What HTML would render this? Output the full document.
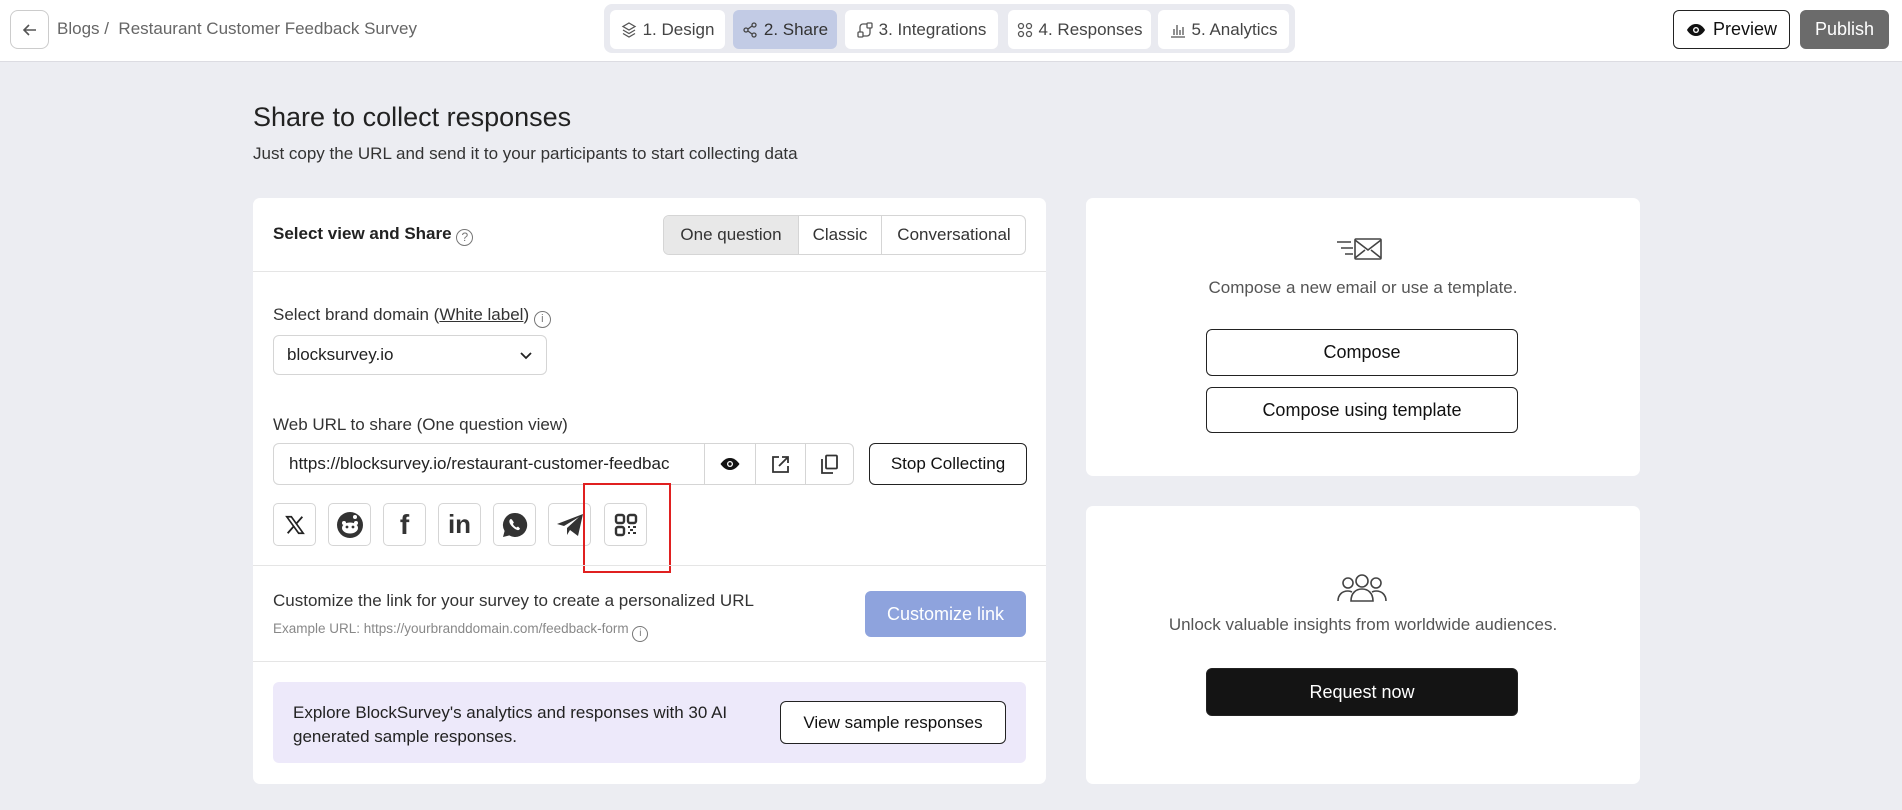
<!DOCTYPE html>
<html><head><meta charset="utf-8"><style>
*{box-sizing:border-box;margin:0;padding:0}
body{width:1902px;height:810px;background:#ecedf2;font-family:"Liberation Sans",sans-serif;color:#222;position:relative;overflow:hidden}
.a{position:absolute}
.hdr{left:0;top:0;width:1902px;height:62px;background:#fff;border-bottom:1px solid #dcdce2}
.tabs{left:604px;top:4px;width:691px;height:49px;background:#e9eaf0;border-radius:8px}
.tab{position:absolute;top:6px;height:39px;background:#fff;border-radius:6px;font-size:17px;color:#444;display:flex;align-items:center;justify-content:center;gap:6px}
.card{background:#fff;border-radius:7px}
.btn{position:absolute;display:flex;align-items:center;justify-content:center;border:1px solid #222;border-radius:6px;font-size:17px;background:#fff;color:#111}
.soc{position:absolute;top:503px;width:43px;height:43px;border:1px solid #d5d5d5;border-radius:5px;display:flex;align-items:center;justify-content:center}
.t{position:absolute;white-space:nowrap}
</style></head><body>
<div class="a hdr"></div>
<div class="a" style="left:10px;top:10px;width:39px;height:39px;border:1px solid #ccc;border-radius:8px;display:flex;align-items:center;justify-content:center"><svg width="18" height="18" viewBox="0 0 18 18"><path d="M15 9H3M8 4L3 9l5 5" fill="none" stroke="#555" stroke-width="1.6"/></svg></div>
<div class="t" style="left:57px;top:19px;font-size:17px;color:#666">Blogs /&nbsp;&nbsp;Restaurant Customer Feedback Survey</div>
<div class="a tabs">
<div class="tab" style="left:6px;width:115px"><svg width="16" height="16" viewBox="0 0 16 16" fill="none" stroke="#555" stroke-width="1.3"><path d="M8 1l6 3.5-6 3.5-6-3.5z M2 8l6 3.5 6-3.5 M2 11.5l6 3.5 6-3.5"/></svg>1. Design</div>
<div class="tab" style="left:129px;width:104px;background:#c2cbe5;color:#333"><svg width="16" height="16" viewBox="0 0 16 16" fill="none" stroke="#444" stroke-width="1.3"><circle cx="12" cy="3" r="2"/><circle cx="4" cy="8" r="2"/><circle cx="12" cy="13" r="2"/><path d="M6 7l4-3M6 9l4 3"/></svg>2. Share</div>
<div class="tab" style="left:241px;width:153px"><svg width="16" height="16" viewBox="0 0 16 16" fill="none" stroke="#555" stroke-width="1.3"><rect x="1" y="10" width="5" height="5" rx="1"/><rect x="10" y="1" width="5" height="5" rx="1"/><path d="M3 10V5a3 3 0 013-3h4M13 6v5a3 3 0 01-3 3H6"/></svg>3. Integrations</div>
<div class="tab" style="left:404px;width:143px"><svg width="16" height="16" viewBox="0 0 16 16" fill="none" stroke="#555" stroke-width="1.3"><circle cx="4" cy="4" r="2.5"/><circle cx="12" cy="4" r="2.5"/><circle cx="4" cy="12" r="2.5"/><circle cx="12" cy="12" r="2.5"/></svg>4. Responses</div>
<div class="tab" style="left:554px;width:131px"><svg width="16" height="16" viewBox="0 0 16 16" fill="none" stroke="#555" stroke-width="1.3"><path d="M1 15h14M4 13V7M7 13V3M10 13V8M13 13V5"/></svg>5. Analytics</div>
</div>
<div class="btn" style="left:1673px;top:10px;width:117px;height:39px;font-size:18px;gap:7px"><svg width="20" height="14" viewBox="0 0 20 14"><path d="M10 1C5 1 2 5 1 7c1 2 4 6 9 6s8-4 9-6c-1-2-4-6-9-6z" fill="#111"/><circle cx="10" cy="7" r="3" fill="#fff"/><circle cx="10" cy="7" r="1.6" fill="#111"/></svg>Preview</div>
<div class="btn" style="left:1800px;top:10px;width:89px;height:39px;font-size:18px;background:#6b6b6b;border-color:#6b6b6b;color:#fff">Publish</div>

<div class="t" style="left:253px;top:102px;font-size:27px;color:#222">Share to collect responses</div>
<div class="t" style="left:253px;top:144px;font-size:17px;color:#333">Just copy the URL and send it to your participants to start collecting data</div>

<div class="a card" style="left:253px;top:198px;width:793px;height:586px"></div>
<div class="t" style="left:273px;top:224px;font-size:17px;font-weight:bold">Select view and Share <span style="display:inline-block;width:17px;height:17px;border:1.4px solid #777;border-radius:50%;font-size:12px;text-align:center;line-height:15px;color:#777;font-weight:normal;vertical-align:-2px">?</span></div>
<div class="a" style="left:663px;top:215px;width:363px;height:40px;border:1px solid #d5d5d5;border-radius:6px;overflow:hidden;font-size:17px;color:#333">
<div class="a" style="left:0;top:0;width:135px;height:38px;background:#e8e8e8;border-right:1px solid #d5d5d5;display:flex;align-items:center;justify-content:center">One question</div>
<div class="a" style="left:135px;top:0;width:83px;height:38px;border-right:1px solid #d5d5d5;display:flex;align-items:center;justify-content:center">Classic</div>
<div class="a" style="left:218px;top:0;width:144px;height:38px;display:flex;align-items:center;justify-content:center">Conversational</div></div>
<div class="a" style="left:253px;top:271px;width:793px;height:1px;background:#e5e5e5"></div>

<div class="t" style="left:273px;top:305px;font-size:17px;color:#333">Select brand domain (<u>White label</u>) <span style="display:inline-block;width:17px;height:17px;border:1.4px solid #777;border-radius:50%;font-size:11px;text-align:center;line-height:15px;color:#777;vertical-align:-2px">i</span></div>
<div class="a" style="left:273px;top:335px;width:274px;height:40px;border:1px solid #d5d5d5;border-radius:6px"></div>
<div class="t" style="left:287px;top:345px;font-size:17px;color:#222">blocksurvey.io</div>
<svg class="a" style="left:518px;top:347px" width="16" height="16" viewBox="0 0 16 16"><path d="M3 6l5 5 5-5" fill="none" stroke="#222" stroke-width="1.8"/></svg>

<div class="t" style="left:273px;top:415px;font-size:17px;color:#333">Web URL to share (One question view)</div>
<div class="a" style="left:273px;top:443px;width:581px;height:42px;border:1px solid #d5d5d5;border-radius:6px"></div>
<div class="a" style="left:704px;top:443px;width:1px;height:42px;background:#d5d5d5"></div>
<div class="a" style="left:755px;top:443px;width:1px;height:42px;background:#d5d5d5"></div>
<div class="a" style="left:805px;top:443px;width:1px;height:42px;background:#d5d5d5"></div>
<div class="t" style="left:289px;top:454px;font-size:17px;color:#222">https://blocksurvey.io/restaurant-customer-feedbac</div>
<svg class="a" style="left:719px;top:456px" width="22" height="16" viewBox="0 0 22 16"><path d="M11 2C6 2 3 6 1.5 8 3 10 6 14 11 14s8-4 9.5-6C19 6 16 2 11 2z" fill="#111"/><circle cx="11" cy="8" r="3" fill="#fff"/><circle cx="11" cy="8" r="1.7" fill="#111"/></svg>
<svg class="a" style="left:771px;top:455px" width="19" height="19" viewBox="0 0 19 19" fill="none" stroke="#333" stroke-width="1.8"><path d="M8 2H2v15h15v-6M11 2h6v6M17 2L8 11"/></svg>
<svg class="a" style="left:820px;top:454px" width="19" height="21" viewBox="0 0 19 21" fill="none" stroke="#333" stroke-width="1.8"><rect x="6" y="1.5" width="11" height="13" rx="1"/><path d="M2 5v14h11"/></svg>
<div class="btn" style="left:869px;top:443px;width:158px;height:42px">Stop Collecting</div>

<div class="soc" style="left:273px"><svg width="22" height="22" viewBox="0 0 24 24"><path d="M3 3h5l13 18h-5z" fill="none" stroke="#222" stroke-width="1.8"/><path d="M20 3l-7 8M4 21l7-8" stroke="#222" stroke-width="2"/></svg></div>
<div class="soc" style="left:328px"><svg width="30" height="30" viewBox="0 0 30 30"><circle cx="15" cy="15" r="13" fill="#333"/><ellipse cx="15" cy="18" rx="8" ry="5.5" fill="#fff"/><circle cx="12" cy="17" r="1.4" fill="#333"/><circle cx="18" cy="17" r="1.4" fill="#333"/><circle cx="20" cy="7" r="2" fill="#fff"/><circle cx="9" cy="13" r="2" fill="#fff"/><circle cx="21" cy="13" r="2" fill="#fff"/></svg></div>
<div class="soc" style="left:383px;font-size:28px;font-weight:bold;color:#333">f</div>
<div class="soc" style="left:438px;font-size:26px;font-weight:bold;color:#333">in</div>
<div class="soc" style="left:493px"><svg width="28" height="28" viewBox="0 0 28 28"><path d="M14 2a12 12 0 00-10.4 18L2 26l6.2-1.6A12 12 0 1014 2z" fill="#333"/><path d="M10 8c-1 0-2 1.5-1.5 3.5S12 17 15 18.5s3.5 0 4-1l-2-2-1.5 1c-1.5-.6-3-2-3.6-3.6l1-1.4-2-3z" fill="#fff"/></svg></div>
<div class="soc" style="left:548px"><svg width="28" height="26" viewBox="0 0 28 26"><path d="M1 12L27 2 22 24l-8-6-3 5v-7l12-11-15 9z" fill="#333"/></svg></div>
<div class="soc" style="left:604px"><svg width="24" height="24" viewBox="0 0 24 24" fill="none" stroke="#333" stroke-width="2.4"><rect x="2" y="2" width="8" height="8" rx="2"/><rect x="14" y="2" width="8" height="8" rx="2"/><rect x="2" y="14" width="8" height="8" rx="2"/><path d="M14 14h2M19 14h3M16 17h3M14 20h2M19 20h3" stroke-width="2"/></svg></div>
<div class="a" style="left:583px;top:483px;width:88px;height:90px;border:2.5px solid #e02020"></div>
<div class="a" style="left:253px;top:565px;width:793px;height:1px;background:#e5e5e5"></div>

<div class="t" style="left:273px;top:591px;font-size:17px;color:#333">Customize the link for your survey to create a personalized URL</div>
<div class="t" style="left:273px;top:621px;font-size:13.5px;color:#888">Example URL: https://yourbranddomain.com/feedback-form <span style="display:inline-block;width:16px;height:16px;border:1.4px solid #777;border-radius:50%;font-size:10px;text-align:center;line-height:14px;color:#777;vertical-align:-3px">i</span></div>
<div class="btn" style="left:865px;top:591px;width:161px;height:46px;background:#8ea3dd;border-color:#8ea3dd;color:#fff;font-size:18px">Customize link</div>
<div class="a" style="left:253px;top:661px;width:793px;height:1px;background:#e5e5e5"></div>

<div class="a" style="left:273px;top:682px;width:753px;height:81px;background:#ede9fa;border-radius:6px"></div>
<div class="t" style="left:293px;top:701px;font-size:17px;color:#222;line-height:24px">Explore BlockSurvey's analytics and responses with 30 AI<br>generated sample responses.</div>
<div class="btn" style="left:780px;top:701px;width:226px;height:43px">View sample responses</div>

<div class="a card" style="left:1086px;top:198px;width:554px;height:278px"></div>
<svg class="a" style="left:1335px;top:237px" width="54" height="26" viewBox="0 0 54 26" fill="none" stroke="#444" stroke-width="1.6"><rect x="20" y="2" width="26" height="20" rx="1"/><path d="M20 3l13 10 13-10M20 21l10-8M46 21l-10-8M2 5h14M6 11h12M10 17h8"/></svg>
<div class="t" style="left:1086px;width:554px;text-align:center;top:278px;font-size:17px;color:#555">Compose a new email or use a template.</div>
<div class="btn" style="left:1206px;top:329px;width:312px;height:47px;font-size:18px">Compose</div>
<div class="btn" style="left:1206px;top:387px;width:312px;height:46px;font-size:18px">Compose using template</div>

<div class="a card" style="left:1086px;top:506px;width:554px;height:278px"></div>
<svg class="a" style="left:1336px;top:573px" width="52" height="30" viewBox="0 0 52 30" fill="none" stroke="#444" stroke-width="1.6"><circle cx="26" cy="8" r="6"/><circle cx="12" cy="10" r="5"/><circle cx="40" cy="10" r="5"/><path d="M15 28c0-8 5-12 11-12s11 4 11 12zM2 28c0-6 4-10 10-10 2 0 3 .5 4 1M50 28c0-6-4-10-10-10-2 0-3 .5-4 1"/></svg>
<div class="t" style="left:1086px;width:554px;text-align:center;top:615px;font-size:17px;color:#555">Unlock valuable insights from worldwide audiences.</div>
<div class="btn" style="left:1206px;top:668px;width:312px;height:48px;font-size:18px;background:#141414;color:#fff">Request now</div>
</body></html>
